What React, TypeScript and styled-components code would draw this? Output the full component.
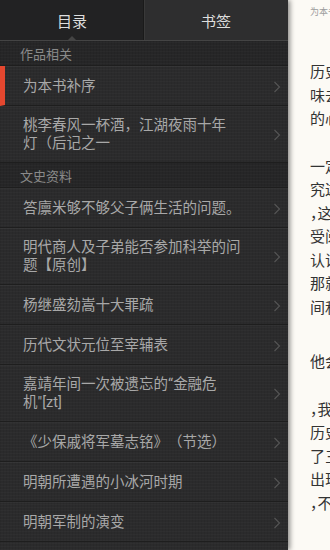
import React from 'react';
import styled, {createGlobalStyle} from "styled-components";

interface Entry {
    title: string;
    active?: boolean;
}

interface Section {
    name: string;
    entries: Entry[];
}

const sections: Section[] = [
    {
        name: "作品相关",
        entries: [
            {title: "为本书补序", active: true},
            {title: "桃李春风一杯酒，江湖夜雨十年\n灯（后记之一"},
        ]
    },
    {
        name: "文史资料",
        entries: [
            {title: "答廪米够不够父子俩生活的问题。"},
            {title: "明代商人及子弟能否参加科举的问题【原创】"},
            {title: "杨继盛劾嵩十大罪疏"},
            {title: "历代文状元位至宰辅表"},
            {title: "嘉靖年间一次被遗忘的“金融危\n机\"[zt]"},
            {title: "《少保戚将军墓志铭》（节选）"},
            {title: "明朝所遭遇的小冰河时期"},
            {title: "明朝军制的演变"},
        ]
    }
];

// only the start of each line shows beside the drawer
const paragraphs: {lines: string[]; gap: number}[] = [
    {gap: 43, lines: ["历史的", "味去读", "的心情"]},
    {gap: 24, lines: ["一定要", "究这段", "，这是", "受阅读", "认识到", "那就是", "间和空"]},
    {gap: 31, lines: ["他会说"]},
    {gap: 24, lines: ["，我们", "历史里", "了三个", "出现的", "，不是"]},
];

const App = () => {
    return (
        <Screen>
            <GlobalStyle/>
            <Drawer>
                <TabBar>
                    <Tab $selected>目录</Tab>
                    <Tab>书签</Tab>
                </TabBar>
                <List>
                    {sections.map(section => (
                        <React.Fragment key={section.name}>
                            <SectionHeader>{section.name}</SectionHeader>
                            {section.entries.map(entry => (
                                <Row key={entry.title} $active={entry.active}>
                                    <Title>{entry.title}</Title>
                                    <Chevron width="8" height="12" viewBox="0 0 8 12">
                                        <polyline points="1.5,1 6.5,6 1.5,11" fill="none" stroke="#555" strokeWidth="1.1"/>
                                    </Chevron>
                                </Row>
                            ))}
                        </React.Fragment>
                    ))}
                </List>
            </Drawer>
            <Reader>
                <PageTitle>为本书补序</PageTitle>
                {paragraphs.map((p, i) => (
                    <Paragraph key={i} $gap={p.gap}>
                        {p.lines.map((line, j) => <Line key={j}>{line}</Line>)}
                    </Paragraph>
                ))}
            </Reader>
        </Screen>
    );
};

export default App;

const GlobalStyle = createGlobalStyle`
  html, body {
    margin: 0;
    padding: 0;
    background: #fcfaf5;
  }
`

const Screen = styled.div`
  width: 330px;
  height: 550px;
  display: flex;
  overflow: hidden;
  font-family: Roboto, "Noto Sans CJK SC", sans-serif;
`

const Drawer = styled.div`
  position: relative;
  z-index: 1;
  width: 288px;
  flex-shrink: 0;
  display: flex;
  flex-direction: column;
  background-color: #2b2b2c;
  background-image: repeating-linear-gradient(0deg, rgba(255, 255, 255, 0.018) 0 1px, transparent 1px 3px),
  repeating-linear-gradient(90deg, rgba(0, 0, 0, 0.06) 0 1px, transparent 1px 3px);
  box-shadow: 2px 0 5px rgba(0, 0, 0, 0.45);
`

const TabBar = styled.div`
  display: grid;
  grid-template-columns: 1fr 1fr;
  height: 40px;
  border-bottom: 1px solid #444;
`

const Tab = styled.div<{ $selected?: boolean }>`
  position: relative;
  display: flex;
  align-items: center;
  justify-content: center;
  font-size: 15px;
  color: #dedede;
  background: ${p => p.$selected ? "#222223" : "#2e2e2f"};
  box-shadow: ${p => p.$selected ? "inset -1px 0 0 #1a1a1a" : "inset 1px 0 0 #393939"};

  &::after {
    content: "";
    display: ${p => p.$selected ? "block" : "none"};
    position: absolute;
    left: 50%;
    bottom: 0;
    margin-left: -4px;
    border-left: 4px solid transparent;
    border-right: 4px solid transparent;
    border-bottom: 4px solid #444;
  }
`

const List = styled.div`
  flex: 1;
  overflow: hidden;
`

const SectionHeader = styled.div`
  height: 24px;
  display: flex;
  align-items: center;
  padding-left: 20px;
  font-size: 13px;
  color: #8a8a8a;
  background: rgba(0, 0, 0, 0.1);
  border-bottom: 1px solid #1e1e1e;
`

const Row = styled.div<{ $active?: boolean }>`
  display: flex;
  align-items: center;
  gap: 25px;
  min-height: 40px;
  box-sizing: border-box;
  padding: 11px 7px 9px ${p => p.$active ? "18px" : "23px"};
  border-left: ${p => p.$active ? "5px solid #e4472f" : "none"};
  border-bottom: 1px solid #1e1e1e;
  box-shadow: inset 0 1px 0 rgba(255, 255, 255, 0.035);
`

const Title = styled.div`
  flex: 1;
  font-size: 14.5px;
  line-height: 18px;
  color: #a8a8a8;
  white-space: pre-line;
  text-spacing-trim: space-all;
`

const Chevron = styled.svg`
  flex-shrink: 0;
  display: block;
`

const Reader = styled.div`
  flex: 1;
  min-width: 0;
  overflow: hidden;
  padding-left: 22px;
  background: #fcfaf5;
  font-family: Roboto, "Noto Sans CJK SC", sans-serif;
`

const PageTitle = styled.div`
  padding-top: 7px;
  font-size: 9px;
  line-height: 11px;
  color: #9d9d9d;
  white-space: nowrap;
`

const Paragraph = styled.div<{ $gap: number }>`
  margin-top: ${p => p.$gap}px;
`

const Line = styled.div`
  font-size: 15px;
  line-height: 23.5px;
  color: #333;
  white-space: nowrap;
  font-feature-settings: "halt";
`
